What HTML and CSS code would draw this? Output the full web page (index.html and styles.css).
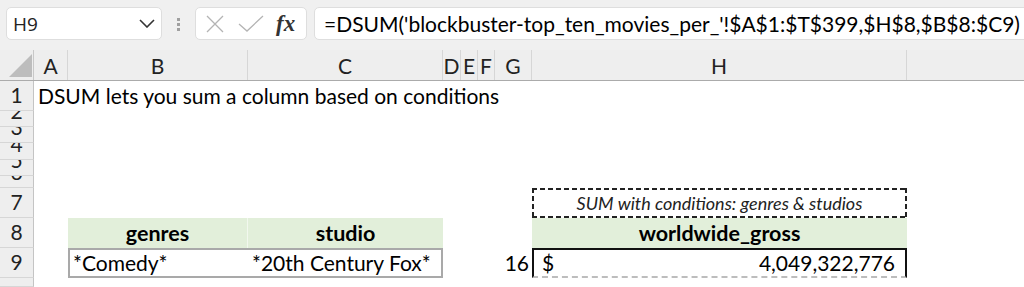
FILE: index.html
```html
<!DOCTYPE html>
<html>
<head>
  <title>DSUM example</title>
  <link rel="stylesheet" href="styles.css">
</head>
<body>

<div class="toolbar">
  <div class="name-box">
    <span>H9</span>
    <svg class="chevron" width="16" height="9" viewBox="0 0 16 9"><path d="M1 1 L8 8 L15 1" /></svg>
  </div>
  <div class="grip"><i></i><i></i><i></i></div>
  <div class="fx-box">
    <svg class="tool-icon" width="20" height="18" viewBox="0 0 20 18"><path d="M2 1 L18 17 M18 1 L2 17" /></svg>
    <svg class="tool-icon" width="26" height="18" viewBox="0 0 26 18"><path d="M1 9 L9 16 L25 1" /></svg>
    <span class="fx">fx</span>
  </div>
  <div class="formula">=DSUM('blockbuster-top_ten_movies_per_'!$A$1:$T$399,$H$8,$B$8:$C9)</div>
</div>

<div class="sheet">
  <div class="row head-row">
    <div class="corner">
      <svg width="33" height="30" viewBox="0 0 33 30"><polygon points="32,4 32,27 9,27" fill="#bdbdbd" /></svg>
    </div>
    <div class="col-head a">A</div>
    <div class="col-head b">B</div>
    <div class="col-head c">C</div>
    <div class="col-head d">D</div>
    <div class="col-head e">E</div>
    <div class="col-head f">F</div>
    <div class="col-head g">G</div>
    <div class="col-head h">H</div>
    <div class="col-head rest"></div>
  </div>

  <div class="row r-full">
    <div class="row-head"><span>1</span></div>
    <div class="cell wide">DSUM lets you sum a column based on conditions</div>
  </div>
  <div class="row r2"><div class="row-head"><span>2</span></div></div>
  <div class="row r3"><div class="row-head"><span>3</span></div></div>
  <div class="row r4"><div class="row-head"><span>4</span></div></div>
  <div class="row r5"><div class="row-head"><span>5</span></div></div>
  <div class="row r6"><div class="row-head"><span>6</span></div></div>

  <div class="row r-full">
    <div class="row-head"><span>7</span></div>
    <div class="cell a-to-g"></div>
    <div class="cell h dash-box">SUM with conditions: genres &amp; studios</div>
  </div>

  <div class="row r-full">
    <div class="row-head"><span>8</span></div>
    <div class="cell a"></div>
    <div class="cell b field-head split">genres</div>
    <div class="cell c field-head">studio</div>
    <div class="cell d-to-g"></div>
    <div class="cell h field-head">worldwide_gross</div>
  </div>

  <div class="row r-full">
    <div class="row-head"><span>9</span></div>
    <div class="cell a"></div>
    <div class="cell b criteria first">*Comedy*</div>
    <div class="cell c criteria last">*20th Century Fox*</div>
    <div class="cell d-to-f"></div>
    <div class="cell g count">16</div>
    <div class="cell h result"><span>$</span><span>4,049,322,776</span></div>
  </div>

  <div class="row r10"><div class="row-head"></div></div>
</div>

</body>
</html>
```

FILE: styles.css
```css
body {
  margin: 0;
  background: #fff;
  font-family: Lato, "Liberation Sans", sans-serif;
  color: #000;
  overflow: hidden;
}

/* formula bar */
.toolbar {
  display: flex;
  align-items: flex-start;
  height: 50px;
  padding: 7px 0 0 6px;
  box-sizing: border-box;
  background: #f0f0f0;
  overflow: hidden;
}

.name-box, .fx-box, .formula {
  height: 33px;
  box-sizing: border-box;
  background: #fff;
  border: 1px solid #dedede;
  border-radius: 5px;
}

.name-box {
  width: 156px;
  display: flex;
  align-items: center;
  justify-content: space-between;
  padding: 0 6px 0 6px;
  font-family: "Open Sans", sans-serif;
  font-size: 19px;
  color: #222;
}

.chevron path {
  fill: none;
  stroke: #333;
  stroke-width: 1.6;
}

.grip {
  width: 33px;
  display: flex;
  flex-direction: column;
  align-items: center;
  gap: 2px;
  padding-top: 11px;
}

.grip i {
  width: 3px;
  height: 3px;
  background: #a0a0a0;
}

.fx-box {
  width: 112px;
  display: flex;
  align-items: center;
  padding-left: 9px;
  gap: 13px;
}

.tool-icon path {
  fill: none;
  stroke: #b4b4b4;
  stroke-width: 1.3;
}

.fx {
  font-family: "Liberation Serif", serif;
  font-style: italic;
  font-weight: bold;
  font-size: 23px;
  color: #333;
  margin-left: -1px;
}

.formula {
  flex: 1;
  min-width: 0;
  margin: 0 -20px 0 7px;
  padding-left: 9px;
  font-size: 21px;
  line-height: 31px;
  white-space: nowrap;
  overflow: hidden;
}

/* sheet grid */
.row {
  display: flex;
  height: 30px;
}

.r2, .r3, .r5 { height: 16px; }
.r4 { height: 17px; }
.r6 { height: 12px; }
.r10 { height: 9px; }

.head-row {
  background: #eeeeee;
  border-bottom: 1px solid #ababab;
}

.corner {
  width: 34px;
  box-sizing: border-box;
  border-right: 1px solid #c8c8c8;
}

.col-head {
  box-sizing: border-box;
  border-right: 1px solid #d6d6d6;
  text-align: center;
  font-size: 21px;
  line-height: 31px;
  color: #222;
}

.col-head.rest {
  flex: 1;
  border-right: none;
}

.a { width: 34px; }
.b { width: 180px; }
.c { width: 195px; }
.d { width: 18px; }
.e { width: 17px; }
.f { width: 17px; }
.g { width: 37px; }
.h { width: 375px; }
.a-to-g { width: 498px; }
.d-to-g { width: 89px; }
.d-to-f { width: 52px; }

.row-head {
  width: 34px;
  flex: none;
  box-sizing: border-box;
  background: #eeeeee;
  border-right: 1px solid #c4c4c4;
  border-bottom: 1px solid #d6d6d6;
  display: flex;
  justify-content: center;
  align-items: flex-end;
  overflow: hidden;
  font-size: 21px;
  color: #222;
}

.row-head span {
  line-height: 30px;
}

.cell {
  box-sizing: border-box;
  font-size: 21px;
  line-height: 30px;
  white-space: nowrap;
}

.wide {
  padding-left: 4px;
}

.dash-box {
  text-align: center;
  font-style: italic;
  font-size: 18px;
  line-height: 30px;
  color: #222;
  background:
    repeating-linear-gradient(90deg, #222 0 5px, transparent 5px 8px) top / 100% 2px no-repeat,
    repeating-linear-gradient(90deg, #222 0 5px, transparent 5px 8px) bottom / 100% 2px no-repeat,
    repeating-linear-gradient(180deg, #222 0 5px, transparent 5px 8px) left / 2px 100% no-repeat,
    repeating-linear-gradient(180deg, #222 0 5px, transparent 5px 8px) right / 2px 100% no-repeat;
}

.field-head {
  background: #e2efda;
  font-weight: bold;
  font-size: 21.5px;
  text-align: center;
}

.split {
  border-right: 1px solid #f2f8ee;
}

.criteria {
  border-top: 2px solid #a9a9a9;
  border-bottom: 2px solid #a9a9a9;
  line-height: 26px;
  padding-left: 3px;
}

.criteria.first {
  border-left: 2px solid #a9a9a9;
}

.criteria.last {
  border-right: 2px solid #a9a9a9;
  padding-left: 4px;
}

.count {
  text-align: right;
  padding-right: 3px;
}

.result {
  display: flex;
  justify-content: space-between;
  border: 2px solid #111;
  border-bottom: 2px dashed #bdbdbd;
  line-height: 26px;
  padding: 0 10px 0 8px;
}
```
